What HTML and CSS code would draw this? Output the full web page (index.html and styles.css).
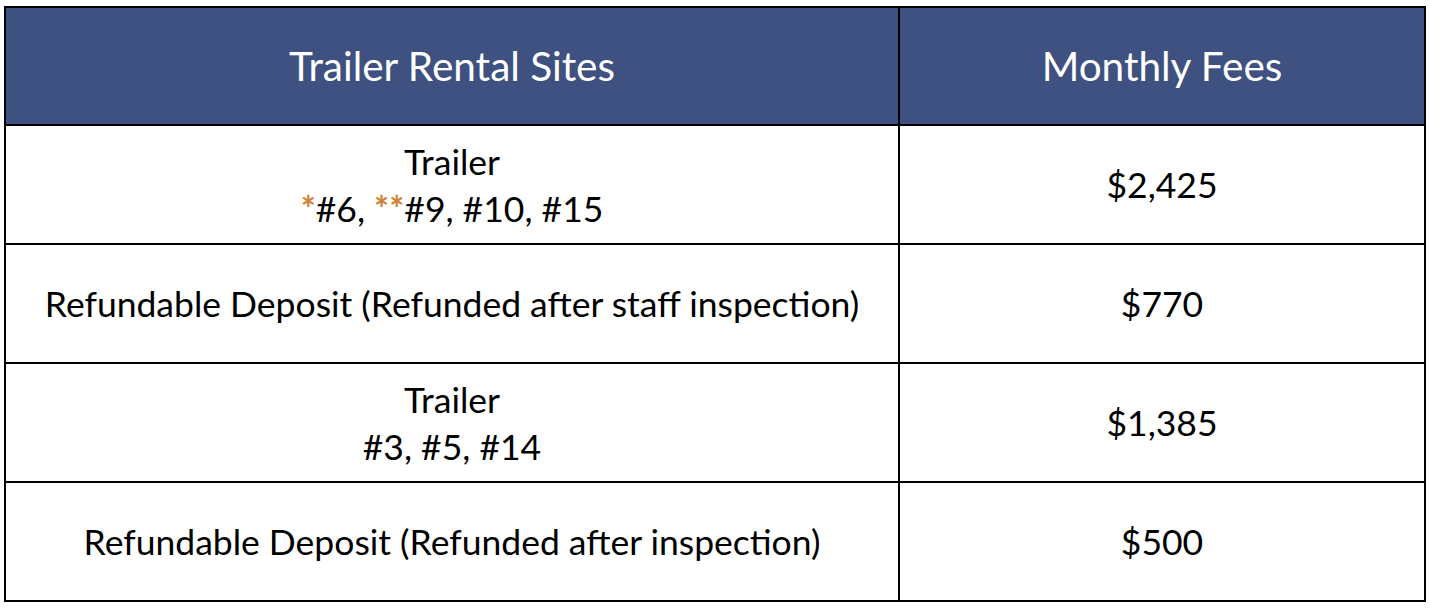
FILE: index.html
```html
<!DOCTYPE html>
<html>
<head>
<meta charset="utf-8">
<link rel="stylesheet" href="styles.css">
</head>
<body>
<table class="fees">
  <thead>
    <tr>
      <th class="col-site">Trailer Rental Sites</th>
      <th class="col-fee">Monthly Fees</th>
    </tr>
  </thead>
  <tbody>
    <tr>
      <td>Trailer<br><span class="star">*</span>#6, <span class="star">**</span>#9, #10, #15</td>
      <td>$2,425</td>
    </tr>
    <tr>
      <td>Refundable Deposit (Refunded after staff inspection)</td>
      <td>$770</td>
    </tr>
    <tr>
      <td>Trailer<br>#3, #5, #14</td>
      <td>$1,385</td>
    </tr>
    <tr>
      <td>Refundable Deposit (Refunded after inspection)</td>
      <td>$500</td>
    </tr>
  </tbody>
</table>
</body>
</html>
```

FILE: styles.css
```css
html, body {
  margin: 0;
  padding: 0;
  background: #ffffff;
}
body {
  padding: 6px 0 0 4px;
  font-family: Lato, "Open Sans", sans-serif;
  color: #000;
}
.fees {
  border-collapse: collapse;
  width: 1422px;
  table-layout: fixed;
}
.fees th, .fees td {
  border: 2px solid #000;
  text-align: center;
  vertical-align: middle;
  padding: 0;
}
.fees th {
  background: #3e5181;
  color: #fff;
  font-weight: normal;
  font-size: 40.5px;
  line-height: 48px;
  height: 116px;
}
.fees td {
  font-size: 35.5px;
  line-height: 47px;
  height: 117px;
}
.col-site { width: 892px; }
.star { color: #d38339; font-weight: bold; }
```
